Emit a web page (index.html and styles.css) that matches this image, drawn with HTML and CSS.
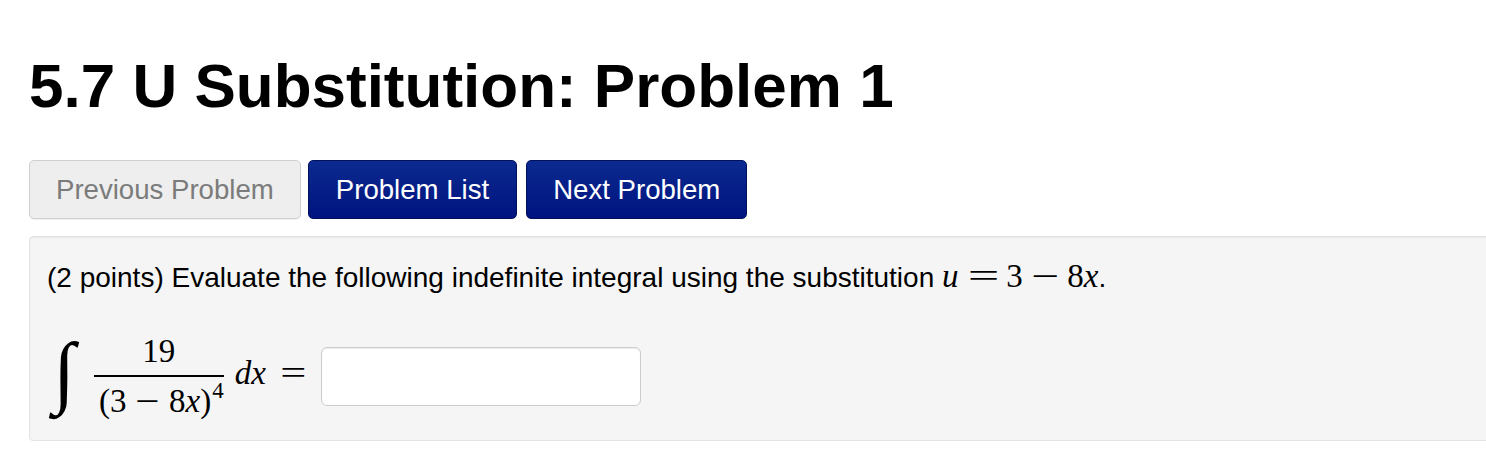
FILE: index.html
```html
<!DOCTYPE html>
<html lang="en">
<head>
    <meta charset="UTF-8">
    <meta name="viewport" content="width=device-width, initial-scale=1.0">
    <title>5.7 U Substitution: Problem 1</title>
    <link rel="stylesheet" href="styles.css">
</head>
<body>
    <div class="problem-page">
        <h1>5.7 U Substitution: Problem 1</h1>

        <div class="nav-buttons">
            <button class="btn btn-disabled">Previous Problem</button>
            <button class="btn btn-primary">Problem List</button>
            <button class="btn btn-primary">Next Problem</button>
        </div>

        <div class="well">
            <p class="prompt">(2 points) Evaluate the following indefinite integral using the substitution
                <span class="math"><i>u</i><span class="op eq">=</span>3<span class="op minus">&minus;</span>8<i>x</i></span>.</p>

            <div class="answer-row">
                <span class="integral">&int;</span>
                <span class="frac">
                    <span class="num">19</span>
                    <span class="den">(3<span class="op minus">&minus;</span>8<i>x</i>)<sup>4</sup></span>
                </span>
                <span class="math dx"><i>dx</i><span class="op eq">=</span></span>
                <input type="text" class="answer" aria-label="answer">
            </div>
        </div>
    </div>
</body>
</html>
```

FILE: styles.css
```css
body { margin: 0; font-family: "Liberation Sans", Arial, Helvetica, sans-serif; color: #000; background: #fff; overflow: hidden; }
.problem-page { padding-left: 29px; }

h1 { font-size: 62px; font-weight: bold; line-height: 69px; margin: 51px 0 40px; }

.nav-buttons { display: flex; gap: 7px; }
.btn { font-family: inherit; font-size: 27.6px; line-height: 32px; height: 59px; padding: 0 26px; border-radius: 5px; cursor: pointer; }
.btn-disabled { background: #eeeeee; color: #7b7b7b; border: 1px solid #cfcfcf; box-shadow: 0 1px 1px rgba(0,0,0,.06); }
.btn-primary { background: linear-gradient(#0b2a8f, #001380); color: #fff; border: 1px solid #00115c; padding: 0 27px; }
.btn-primary + .btn-primary { margin-left: 2px; padding: 0 26px; }

.well { margin-top: 17px; margin-right: -40px; background: #f5f5f5; border: 1px solid #e3e3e3; border-radius: 4px; padding: 19px 17px 22px; box-shadow: inset 0 1px 1px rgba(0,0,0,.05); }
.prompt { font-size: 28px; line-height: 40px; margin: 0 0 37px; }

.math { font-family: "Liberation Serif", "Times New Roman", serif; font-size: 33px; }
.math i, .den i { font-style: italic; }
.op { display: inline-block; }
.op.eq { padding: 0 14px 0 15px; transform: scaleX(1.7); }
.op.minus { padding: 0 13px; transform: scaleX(1.5); }

.answer-row { display: flex; align-items: center; }
.integral { font-family: "Liberation Serif", "Times New Roman", serif; font-size: 80px; line-height: 70px; font-style: italic; margin: 0 19px 12px 6px; }
.frac { display: flex; flex-direction: column; align-items: center; font-family: "Liberation Serif", "Times New Roman", serif; font-size: 33px; }
.num { line-height: 33px; padding: 0 0 7px; }
.den { line-height: 33px; padding: 8px 0 0 5px; border-top: 2px solid #000; }
.den .op.minus { padding: 0 12px; transform: scaleX(1.3); }
.den sup { font-size: 23px; line-height: 0; vertical-align: 14px; margin-left: 1px; }
.dx { margin-left: 11px; padding-bottom: 7px; line-height: 33px; }
.dx .op.eq { padding: 0 0 0 15px; transform: scaleX(1.4); }

.answer { margin-left: 22px; width: 320px; height: 59px; box-sizing: border-box; border: 1px solid #cccccc; border-radius: 6px; background: #fff; font-size: 26px; padding: 0 12px; box-shadow: inset 0 1px 1px rgba(0,0,0,.075); }
```
